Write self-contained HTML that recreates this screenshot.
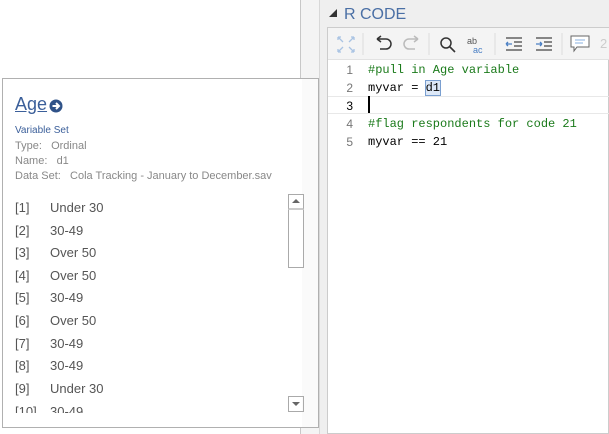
<!DOCTYPE html>
<html><head><style>
*{margin:0;padding:0;box-sizing:border-box}
body{width:609px;height:434px;overflow:hidden;position:relative;background:#fff;font-family:"Liberation Sans",sans-serif}
.abs{position:absolute}
.code{font-family:"Liberation Mono",monospace;font-size:12px;line-height:18px}
.pop{font-family:"Liberation Sans",sans-serif;color:#666}
.row{position:absolute;left:12px;font-size:13px;color:#555}
.row span{position:absolute;left:35px;white-space:nowrap}
</style></head><body>
<div class="abs" style="left:300px;top:0;width:1px;height:434px;background:#c8c8c8"></div>
<div class="abs" style="left:301px;top:0;width:18px;height:434px;background:#f4f4f4"></div>
<div class="abs" style="left:319px;top:0;width:1px;height:434px;background:#d8d8d8"></div>
<div class="abs" style="left:320px;top:0;width:289px;height:434px;background:#efefef"></div>
<div class="abs" style="left:329px;top:9px;width:0;height:0;border-left:8px solid transparent;border-bottom:8px solid #333"></div>
<div class="abs" style="left:344px;top:6px;font-size:16px;color:#4a6fa5">R CODE</div>
<div class="abs" style="left:327px;top:27px;width:282px;height:407px;background:#fff;border:1px solid #ccc"></div>
<div class="abs" style="left:328px;top:28px;width:281px;height:32px;background:#f4f4f4;border-bottom:1px solid #e2e2e2"></div>
<svg class="abs" style="left:328px;top:28px" width="281" height="32">
<g stroke="#a9c3e3" stroke-width="1.3" fill="none"><path d="M10 9l5 5M10 9h3M10 9v3M26 9l-5 5M26 9h-3M26 9v3M10 24l5-5M10 24h3M10 24v-3M26 24l-5-5M26 24h-3M26 24v-3"/></g>
<line x1="35" y1="5" x2="35" y2="27" stroke="#ddd"/>
<path d="M49 11h9a5 5 0 0 1 0 10h-6M49 11l4-3M49 11l4 3" stroke="#333" stroke-width="1.5" fill="none"/>
<path d="M90 11h-9a5 5 0 0 0 0 10h6M90 11l-4-3M90 11l-4 3" stroke="#bbb" stroke-width="1.5" fill="none"/>
<line x1="101" y1="5" x2="101" y2="27" stroke="#ddd"/>
<circle cx="118" cy="15" r="5" stroke="#333" stroke-width="1.5" fill="none"/><path d="M122 19l5 5" stroke="#333" stroke-width="1.6"/>
<text x="139" y="16" font-size="9" fill="#555" font-family="Liberation Sans">ab</text><text x="145" y="25" font-size="9" fill="#4a7fc4" font-family="Liberation Sans">ac</text>
<line x1="167" y1="5" x2="167" y2="27" stroke="#ddd"/>
<g stroke="#444" stroke-width="1.3"><path d="M178 10h16M186 14h8M186 18h8M178 22h16"/><path d="M208 10h16M216 14h8M216 18h8M208 22h16"/></g>
<path d="M178 16h6M178 16l2-2M178 16l2 2M208 16h6M214 16l-2-2M214 16l-2 2" stroke="#4a7fc4" stroke-width="1.3"/>
<line x1="234" y1="5" x2="234" y2="27" stroke="#ddd"/>
<path d="M243 8h18v11h-12l-3 4v-4h-3z" stroke="#666" fill="#fff"/><path d="M247 12h10M247 15h8" stroke="#8ab0e0"/>
<text x="272" y="20" font-size="13" fill="#ccc" font-family="Liberation Sans">2</text>
</svg>
<div class="abs" style="left:328px;top:96px;width:281px;height:18px;border-top:1px solid #e8e8e8;border-bottom:1px solid #e8e8e8"></div>
<div class="abs" style="left:339px;top:61px;width:14px;text-align:right;color:#777;font-size:12px;line-height:18px;font-family:'Liberation Sans',sans-serif">1<br>2<br><span style="color:#000">3</span><br>4<br>5</div>
<div class="abs code" style="left:368px;top:61px;white-space:pre;color:#000"><span style="color:#1a7a1a">#pull in Age variable</span>
myvar = <span style="background:#dde8f7;outline:1px solid #7a9fd0">d1</span>

<span style="color:#1a7a1a">#flag respondents for code 21</span>
myvar == 21</div>
<div class="abs" style="left:368px;top:96px;width:2px;height:17px;background:#000"></div>

<div class="abs pop" style="left:2px;top:78px;width:317px;height:350px;background:#fff;border:1px solid #b0b0b0">
<div class="abs" style="left:299px;top:0;width:16px;height:348px;background:#fafafa"></div>
<div class="abs" style="left:12px;top:15px;font-size:18px;color:#3b5f9a;text-decoration:underline">Age</div>
<svg class="abs" style="left:46px;top:20px" width="16" height="16"><circle cx="7" cy="7" r="6.5" fill="#2f5288"/><path d="M3.5 7h6M7 4l3 3-3 3" stroke="#fff" stroke-width="2" fill="none"/></svg>
<div class="abs" style="left:12px;top:46px;font-size:10px;color:#3b5f9a">Variable Set</div>
<div class="abs" style="left:12px;top:60px;font-size:11px;line-height:15px;color:#888;white-space:pre">Type:   Ordinal
Name:   d1
Data Set:   Cola Tracking - January to December.sav</div>
<div class="abs" style="left:0;top:112px;width:300px;height:222px;overflow:hidden">
<div class="row" style="top:9px">[1]<span>Under 30</span></div>
<div class="row" style="top:32px">[2]<span>30-49</span></div>
<div class="row" style="top:54px">[3]<span>Over 50</span></div>
<div class="row" style="top:77px">[4]<span>Over 50</span></div>
<div class="row" style="top:99px">[5]<span>30-49</span></div>
<div class="row" style="top:122px">[6]<span>Over 50</span></div>
<div class="row" style="top:145px">[7]<span>30-49</span></div>
<div class="row" style="top:167px">[8]<span>30-49</span></div>
<div class="row" style="top:190px">[9]<span>Under 30</span></div>
<div class="row" style="top:213px">[10]<span>30-49</span></div>
</div>
<div class="abs" style="left:285px;top:115px;width:16px;height:74px;border:1px solid #aaa;background:#fff"></div>
<div class="abs" style="left:285px;top:115px;width:16px;height:16px;border:1px solid #aaa;border-bottom:2px solid #ccc"></div>
<div class="abs" style="left:289px;top:120px;width:0;height:0;border-left:4px solid transparent;border-right:4px solid transparent;border-bottom:4px solid #666"></div>
<div class="abs" style="left:285px;top:317px;width:16px;height:16px;border:1px solid #aaa"></div>
<div class="abs" style="left:289px;top:323px;width:0;height:0;border-left:4px solid transparent;border-right:4px solid transparent;border-top:4px solid #666"></div>
</div>
</body></html>
